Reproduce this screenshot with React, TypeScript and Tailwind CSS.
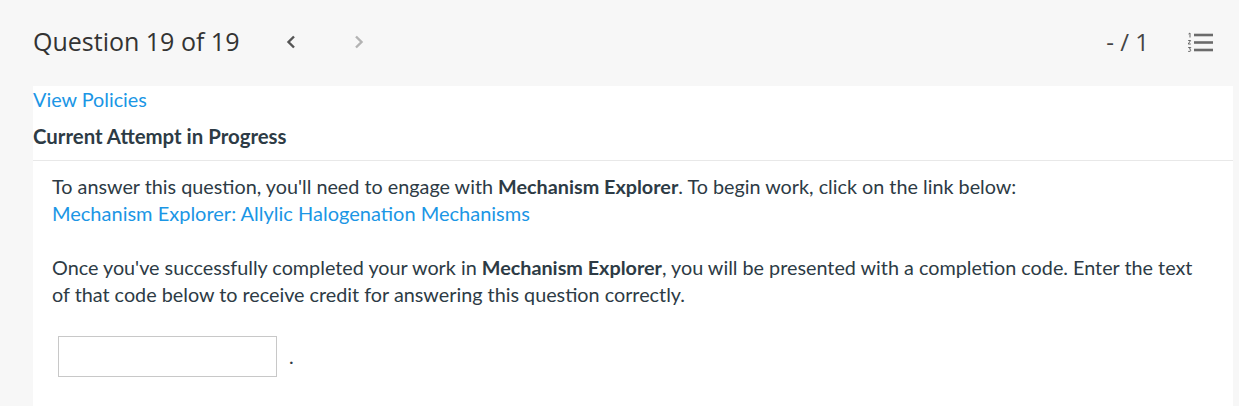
import React from "react";

function ListIcon() {
  return (
    <svg width="28" height="22" viewBox="0 0 28 22" className="block">
      <g fill="none" stroke="#666" strokeWidth="1">
        <path d="M1.5 3 L3 2 L3 6.5" />
        <path d="M1.2 9.5 H3.6 L1.2 13 H3.8" />
        <path d="M1.2 16.5 H3.8 L2.4 18 Q4 18.4 3.8 19.6 Q3.6 20.6 1.2 20.4" />
      </g>
      <g stroke="#6b6b6b" strokeWidth="2.6" strokeLinecap="butt">
        <line x1="7" y1="4" x2="26" y2="4" />
        <line x1="7" y1="11.5" x2="26" y2="11.5" />
        <line x1="7" y1="19" x2="26" y2="19" />
      </g>
    </svg>
  );
}

export default function App() {
  return (
    <div
      className="w-full h-[406px] overflow-hidden bg-[#f7f7f7] text-[#2d3b45]"
      style={{ fontFamily: "Lato, 'Open Sans', sans-serif" }}
    >
      <header className="h-[86px] flex items-center pl-[33px] pr-[24px] pb-[3px]">
        <h1 className="text-[25px] leading-none text-[#333] font-['Open_Sans',sans-serif] font-normal">
          Question 19 of 19
        </h1>
        <div className="flex items-center ml-[44px] gap-[52px]">
          <button className="w-[16px] h-[20px] flex items-center justify-center">
            <svg width="10" height="14" viewBox="0 0 10 14">
              <path d="M8 1.5 L2.5 7 L8 12.5" fill="none" stroke="#555" strokeWidth="2.4" />
            </svg>
          </button>
          <button className="w-[16px] h-[20px] flex items-center justify-center">
            <svg width="10" height="14" viewBox="0 0 10 14">
              <path d="M2 1.5 L7.5 7 L2 12.5" fill="none" stroke="#b3b3b3" strokeWidth="2.4" />
            </svg>
          </button>
        </div>
        <div className="ml-auto flex items-center">
          <span className="text-[24px] leading-none text-[#444] font-['Open_Sans',sans-serif]">
            - / 1
          </span>
          <span className="ml-[38px] mt-[1px]">
            <ListIcon />
          </span>
        </div>
      </header>
      <main className="ml-[33px] mr-[6px] bg-white h-[320px]">
        <div className="border-b border-[#e8e8e8] pb-[10px]">
          <a className="block text-[19.8px] leading-[27px] text-[#1b96e5]">View Policies</a>
          <div className="mt-[10px] text-[20.4px] leading-[27px] font-bold text-[#2d3b45]">
            Current Attempt in Progress
          </div>
        </div>
        <div className="pl-[19px] pr-[19px] pt-[12px] text-[19.8px] leading-[27px]">
          <p>
            To answer this question, you'll need to engage with <b>Mechanism Explorer</b>. To begin work, click on the link below:
            <br />
            <a className="text-[#1b96e5] text-[20px]">Mechanism Explorer: Allylic Halogenation Mechanisms</a>
          </p>
          <p className="mt-[27px]">
            Once you've successfully completed your work in <b>Mechanism Explorer</b>, you will be presented with a completion code. Enter the text of that code below to receive credit for answering this question correctly.
          </p>
          <div className="mt-[28px] pl-[6px] flex items-center">
            <input
              type="text"
              className="w-[219px] h-[41px] border border-[#c8c8c8] bg-white outline-none"
            />
            <span className="ml-[12px] text-[19.8px] leading-[27px]">.</span>
          </div>
        </div>
      </main>
    </div>
  );
}
